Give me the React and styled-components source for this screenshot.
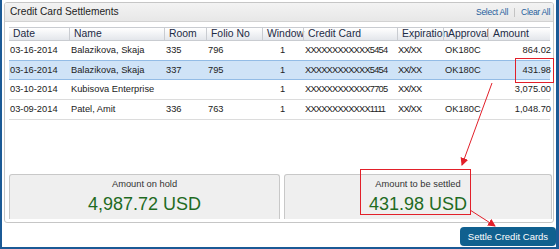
import React from "react";
import styled, { createGlobalStyle } from "styled-components";

const GlobalStyle = createGlobalStyle`
  html, body {
    margin: 0;
    padding: 0;
    background: #fff;
  }
  body {
    font-family: "Liberation Sans", Arial, sans-serif;
  }
`;

// outer dialog frame
const Frame = styled.div`
  position: relative;
  box-sizing: border-box;
  width: 559px;
  height: 249px;
  padding-top: 2px;
  border-left: 2px solid #1b5a96;
  border-right: 3px solid #1b5a96;
  border-bottom: 2px solid #1b5a96;
  display: flex;
  flex-direction: column;
  background: #fff;
`;

const Panel = styled.div`
  box-sizing: border-box;
  height: 221px;
  margin: 0 2px;
  border: 1px solid #c6c6c6;
  border-radius: 3px;
  background: #fff;
  display: flex;
  flex-direction: column;
  overflow: hidden;
`;

const TitleBar = styled.div`
  height: 18px;
  border-bottom: 1px solid #d2d2d2;
  background: linear-gradient(#f3f3f3, #e7e7e7);
  display: flex;
  align-items: center;
  justify-content: space-between;
  padding: 0 3px 0 5px;
`;

const Title = styled.span`
  font-size: 10.2px;
  color: #1e1e1e;
  line-height: 18px;
`;

const Links = styled.div`
  display: flex;
  align-items: center;
  gap: 6px;
`;

const LinkText = styled.span`
  font-size: 8.5px;
  letter-spacing: -0.3px;
  color: #1f5e9c;
  line-height: 12px;
`;

const Divider = styled.span`
  width: 1px;
  height: 9px;
  background: #c4c4c4;
`;

const Grid = styled.div`
  margin: 5px 0 0 4px;
  width: 541px;
`;

const Row = styled.div`
  display: grid;
  grid-template-columns: 60px 95px 42px 56px 41px 94px 46px 45px 62px;
  box-sizing: border-box;
  position: relative;
  height: ${(p) => (p.$head ? "14px" : "20px")};
  border-top: ${(p) =>
    p.$head ? "1px solid #c9ccd1" : p.$selected ? "1px solid #93bce6" : "none"};
  border-bottom: 1px solid
    ${(p) => (p.$head ? "#c9ccd1" : p.$selected ? "#93bce6" : "#dcdcdc")};
  margin-top: ${(p) => (p.$selected ? "-1px" : "0")};
  background: ${(p) =>
    p.$head
      ? "linear-gradient(#ffffff, #e3e6eb)"
      : p.$selected
      ? "#cfe3f7"
      : "transparent"};
`;

const Th = styled.div`
  font-size: 10.4px;
  color: #1d2b45;
  line-height: 12px;
  padding-left: 4px;
  white-space: nowrap;
  border-left: ${(p) => (p.$first ? "none" : "1px solid #c9ccd1")};
`;

const Td = styled.div`
  font-size: 9.3px;
  color: #222;
  line-height: 19px;
  white-space: nowrap;
  padding-left: ${(p) => p.$pad ?? 0}px;
  text-align: ${(p) => p.$align || "left"};
  letter-spacing: ${(p) => (p.$tight ? "-0.8px" : "normal")};
  ${(p) => p.$align === "right" && "margin-right: -1px;"}
`;

const Spacer = styled.div`
  flex: 1;
`;

const Summary = styled.div`
  display: flex;
  gap: 4px;
  padding-left: 4px;
  margin-bottom: 3px;
`;

const TotalBox = styled.div`
  box-sizing: border-box;
  width: ${(p) => p.$width}px;
  height: 45px;
  border: 1px solid #c8c8c8;
  border-bottom: none;
  border-radius: 3px 3px 0 0;
  background: #efefef;
  display: flex;
  flex-direction: column;
  align-items: center;
  padding-top: 3px;
`;

const TotalLabel = styled.div`
  font-size: 9.3px;
  color: #333;
  line-height: 12px;
`;

const TotalValue = styled.div`
  font-size: 18px;
  color: #1f6b1f;
  line-height: 22px;
  margin-top: 3px;
`;

const Footer = styled.div`
  display: flex;
  justify-content: flex-end;
  margin-top: 4px;
`;

const SettleButton = styled.button`
  box-sizing: border-box;
  width: 96px;
  height: 19px;
  border: none;
  border-radius: 4px;
  background: #10608f;
  color: #fff;
  font-family: "Liberation Sans", Arial, sans-serif;
  font-size: 9.5px;
  padding: 0;
  cursor: pointer;
`;

// red callouts drawn on top of the screenshot
const Annotations = styled.svg`
  position: absolute;
  left: -2px;
  top: 0;
  pointer-events: none;
`;

const columns = [
  "Date",
  "Name",
  "Room",
  "Folio No",
  "Window",
  "Credit Card",
  "Expiration",
  "Approval",
  "Amount",
];

const settlements = [
  { date: "03-16-2014", name: "Balazikova, Skaja", room: "335", folio: "796", window: "1", card: "XXXXXXXXXXXX5454", exp: "XX/XX", approval: "OK180C", amount: "864.02" },
  { date: "03-16-2014", name: "Balazikova, Skaja", room: "337", folio: "795", window: "1", card: "XXXXXXXXXXXX5454", exp: "XX/XX", approval: "OK180C", amount: "431.98", selected: true },
  { date: "03-10-2014", name: "Kubisova Enterprise", room: "", folio: "", window: "1", card: "XXXXXXXXXXXX7705", exp: "XX/XX", approval: "", amount: "3,075.00" },
  { date: "03-09-2014", name: "Patel, Amit", room: "336", folio: "763", window: "1", card: "XXXXXXXXXXXX1111", exp: "XX/XX", approval: "OK180C", amount: "1,048.70" },
];

const App = () => {
  return (
    <>
      <GlobalStyle />
      <Frame>
        <Panel>
          <TitleBar>
            <Title>Credit Card Settlements</Title>
            <Links>
              <LinkText>Select All</LinkText>
              <Divider />
              <LinkText>Clear All</LinkText>
            </Links>
          </TitleBar>

          <Grid>
            <Row $head>
              {columns.map((c, i) => (
                <Th key={c} $first={i === 0}>
                  {c}
                </Th>
              ))}
            </Row>
            {settlements.map((s, i) => (
              <Row key={i} $selected={s.selected}>
                <Td $pad={1}>{s.date}</Td>
                <Td $pad={2}>{s.name}</Td>
                <Td $pad={2}>{s.room}</Td>
                <Td $pad={2}>{s.folio}</Td>
                <Td $align="center">{s.window}</Td>
                <Td $pad={2} $tight>{s.card}</Td>
                <Td $pad={1} $tight>{s.exp}</Td>
                <Td $pad={2}>{s.approval}</Td>
                <Td $align="right">{s.amount}</Td>
              </Row>
            ))}
          </Grid>

          <Spacer />

          <Summary>
            <TotalBox $width={271}>
              <TotalLabel>Amount on hold</TotalLabel>
              <TotalValue>4,987.72 USD</TotalValue>
            </TotalBox>
            <TotalBox $width={268}>
              <TotalLabel>Amount to be settled</TotalLabel>
              <TotalValue>431.98 USD</TotalValue>
            </TotalBox>
          </Summary>
        </Panel>

        <Footer>
          <SettleButton>Settle Credit Cards</SettleButton>
        </Footer>

        <Annotations width="559" height="249" viewBox="0 0 559 249">
          <defs>
            <marker
              id="head"
              markerWidth="8"
              markerHeight="8"
              refX="7"
              refY="4"
              orient="auto"
              markerUnits="userSpaceOnUse"
            >
              <path d="M0,0 L8,4 L0,8 Z" fill="#e2202a" />
            </marker>
          </defs>
          <rect x="515.5" y="58.5" width="38" height="24" fill="none" stroke="#e2202a" />
          <rect x="360.5" y="169.5" width="110" height="45" fill="none" stroke="#e2202a" />
          <line x1="492" y1="83" x2="462" y2="165" stroke="#e2202a" markerEnd="url(#head)" />
          <line x1="470" y1="210" x2="495" y2="226" stroke="#e2202a" markerEnd="url(#head)" />
        </Annotations>
      </Frame>
    </>
  );
};

export default App;
